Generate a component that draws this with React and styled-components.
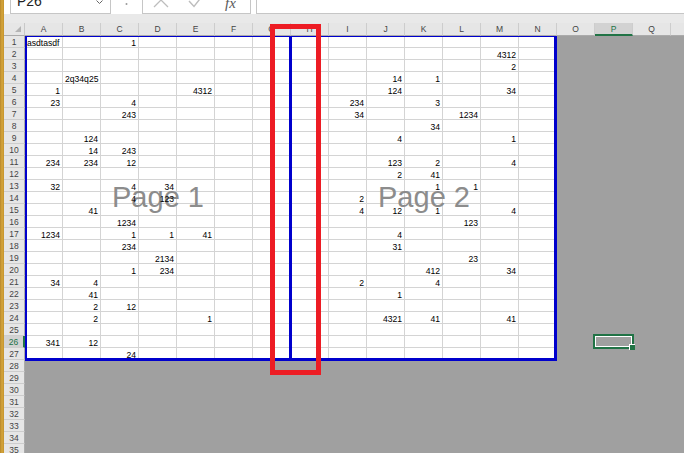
import React from 'react';
import styled, { createGlobalStyle } from 'styled-components';

const GlobalStyle = createGlobalStyle`
  html, body {
    margin: 0;
    padding: 0;
    overflow: hidden;
    background: #ffffff;
  }
  body {
    font-family: "Liberation Sans", Arial, sans-serif;
  }
`;

const COLUMNS = 'ABCDEFGHIJKLMNOPQ'.split('');
const PAGE_ONE = 'ABCDEFG'.split('');
const PAGE_TWO = 'HIJKLMN'.split('');
const PAGE_ROWS = 27;
const HEADER_ROWS = 35;
const SELECTED_COL = 'P';
const SELECTED_ROW = 26;
const GREEN = '#217346';
const BLUE = '#0000cc';

const DATA = {
  1: { A: 'asdtasdf', C: '1' },
  2: { M: '4312' },
  3: { M: '2' },
  4: { B: '2q34q25', J: '14', K: '1' },
  5: { A: '1', E: '4312', J: '124', M: '34' },
  6: { A: '23', C: '4', I: '234', K: '3' },
  7: { C: '243', I: '34', L: '1234' },
  8: { K: '34' },
  9: { B: '124', J: '4', M: '1' },
  10: { B: '14', C: '243' },
  11: { A: '234', B: '234', C: '12', J: '123', K: '2', M: '4' },
  12: { J: '2', K: '41' },
  13: { A: '32', C: '4', D: '34', K: '1', L: '1' },
  14: { C: '4', D: '123', I: '2' },
  15: { B: '41', I: '4', J: '12', K: '1', M: '4' },
  16: { C: '1234', L: '123' },
  17: { A: '1234', C: '1', D: '1', E: '41', J: '4' },
  18: { C: '234', J: '31' },
  19: { D: '2134', L: '23' },
  20: { C: '1', D: '234', K: '412', M: '34' },
  21: { A: '34', B: '4', I: '2', K: '4' },
  22: { B: '41', J: '1' },
  23: { B: '2', C: '12' },
  24: { B: '2', E: '1', J: '4321', K: '41', M: '41' },
  26: { A: '341', B: '12' },
  27: { C: '24' },
};

const Window = styled.div`
  position: relative;
  display: flex;
  width: 684px;
  height: 453px;
  overflow: hidden;
`;

const GoldStrip = styled.div`
  width: 4px;
  flex-shrink: 0;
  background: linear-gradient(90deg, #b7862a 0, #d5a63c 50%, #c4922c 100%);
`;

const Workspace = styled.div`
  flex: 1;
  display: flex;
  flex-direction: column;
  min-width: 0;
`;

const FormulaBar = styled.div`
  height: 14px;
  display: flex;
  align-items: flex-end;
  overflow: hidden;
  background: #ffffff;
  padding-left: 6px;
  flex-shrink: 0;
`;

const NameBox = styled.div`
  box-sizing: border-box;
  width: 101px;
  height: 25px;
  flex-shrink: 0;
  border: 1px solid #c6c6c6;
  display: flex;
  align-items: center;
  justify-content: space-between;
  padding: 0 7px 0 6px;
  font-size: 14px;
  line-height: 23px;
  color: #222222;
`;

const Dots = styled.div`
  width: 31px;
  height: 25px;
  flex-shrink: 0;
  display: flex;
  align-items: flex-end;
  justify-content: center;
  padding-bottom: 8px;
  box-sizing: border-box;
`;

const ButtonBox = styled.div`
  box-sizing: border-box;
  width: 109px;
  height: 25px;
  flex-shrink: 0;
  border: 1px solid #c6c6c6;
  display: grid;
  grid-template-columns: repeat(3, 35px);
  align-items: center;
  justify-items: center;
`;

const FxLabel = styled.span`
  font-family: "Liberation Serif", "Times New Roman", serif;
  font-style: italic;
  font-size: 15px;
  color: #5a5a5a;
  margin-top: 3px;
`;

const FormulaInput = styled.div`
  box-sizing: border-box;
  flex: 1;
  height: 25px;
  margin-left: 5px;
  border: 1px solid #c6c6c6;
  border-right: none;
`;

const Band = styled.div`
  height: 9px;
  flex-shrink: 0;
  background: #e9e9e9;
`;

const Sheet = styled.div`
  flex: 1;
  display: grid;
  grid-template-columns: 21px 1fr;
  grid-template-rows: 13px 1fr;
  min-height: 0;
`;

const Corner = styled.div`
  box-sizing: border-box;
  background: #e6e6e6;
  border-right: 1px solid #c8c8c8;
  border-bottom: 1px solid #ababab;
  display: flex;
  align-items: flex-end;
  justify-content: flex-end;
  padding: 0 3px 3px 0;
`;

const ColumnHeaders = styled.div`
  display: flex;
  overflow: hidden;
  background: #e6e6e6;
`;

const ColHeader = styled.div`
  box-sizing: border-box;
  width: 38px;
  flex-shrink: 0;
  height: 13px;
  border-right: 1px solid #cdcdcd;
  border-bottom: ${(p) => (p.$selected ? `2px solid ${GREEN}` : '1px solid #ababab')};
  background: ${(p) => (p.$selected ? '#d2d2d2' : '#e6e6e6')};
  color: ${(p) => (p.$selected ? GREEN : '#444444')};
  font-size: 8.5px;
  line-height: 12px;
  text-align: center;
`;

const HeaderFiller = styled.div`
  flex: 1;
  height: 13px;
  box-sizing: border-box;
  border-bottom: 1px solid #ababab;
`;

const RowHeaders = styled.div`
  display: flex;
  flex-direction: column;
  overflow: hidden;
  background: #e6e6e6;
`;

const RowHeader = styled.div`
  box-sizing: border-box;
  height: 12px;
  flex-shrink: 0;
  border-bottom: 1px solid #cdcdcd;
  border-right: ${(p) => (p.$selected ? `2px solid ${GREEN}` : '1px solid #ababab')};
  background: ${(p) => (p.$selected ? '#d2d2d2' : '#e6e6e6')};
  color: ${(p) => (p.$selected ? GREEN : '#444444')};
  font-size: 8.5px;
  line-height: 12px;
  text-align: center;
`;

const Canvas = styled.div`
  position: relative;
  background: #a0a0a0;
  overflow: hidden;
`;

const PrintArea = styled.div`
  display: flex;
  width: max-content;
`;

const Page = styled.div`
  position: relative;
  display: grid;
  grid-template-columns: repeat(7, 38px);
  grid-auto-rows: 12px;

  &::after {
    content: '';
    position: absolute;
    left: 0;
    right: 0;
    top: -1px;
    bottom: -1px;
    border-top: 2px solid ${BLUE};
    border-bottom: 3px solid ${BLUE};
    border-left: ${(p) => p.$left}px solid ${BLUE};
    border-right: ${(p) => p.$right}px solid ${BLUE};
    z-index: 3;
    pointer-events: none;
  }
`;

const Cell = styled.div`
  box-sizing: border-box;
  background: #ffffff;
  border-right: 1px solid #d4d4d4;
  border-bottom: 1px solid #d4d4d4;
  padding: 0 2px;
  font-size: 8.6px;
  line-height: 14px;
  white-space: nowrap;
  color: #000000;
  text-align: ${(p) => p.$align};
`;

const CellText = styled.span`
  position: relative;
  z-index: 2;
`;

const Watermark = styled.div`
  position: absolute;
  inset: 0;
  display: flex;
  align-items: center;
  justify-content: center;
  font-size: 29px;
  color: #8c8c8c;
  z-index: 1;
  pointer-events: none;
  padding-bottom: 2px;
`;

const Selection = styled.div`
  position: absolute;
  left: 568px;
  top: 298px;
  width: 41px;
  height: 15px;
  box-sizing: border-box;
  border: 2px solid ${GREEN};
  box-shadow: inset 0 0 0 1px #ffffff;
`;

const FillHandle = styled.div`
  position: absolute;
  right: -3px;
  bottom: -3px;
  width: 6px;
  height: 6px;
  box-sizing: border-box;
  background: ${GREEN};
  border-left: 1px solid #ffffff;
  border-top: 1px solid #ffffff;
`;

const Annotation = styled.div`
  position: absolute;
  left: 270px;
  top: 24px;
  width: 51px;
  height: 351px;
  box-sizing: border-box;
  border: 5px solid #ed1c24;
  z-index: 10;
  pointer-events: none;
`;

const CornerTriangle = () => (
  <svg width="6" height="6" viewBox="0 0 6 6">
    <polygon points="6,0 6,6 0,6" fill="#b4b4b4" />
  </svg>
);

const Caret = () => (
  <svg width="7" height="4" viewBox="0 0 7 4">
    <polyline points="0.5,0.5 3.5,3.5 6.5,0.5" fill="none" stroke="#666" strokeWidth="1" />
  </svg>
);

const VerticalDots = () => (
  <svg width="3" height="14" viewBox="0 0 3 14">
    <circle cx="1.5" cy="2" r="1" fill="#9a9a9a" />
    <circle cx="1.5" cy="7" r="1" fill="#9a9a9a" />
    <circle cx="1.5" cy="12" r="1" fill="#9a9a9a" />
  </svg>
);

const CancelIcon = () => (
  <svg width="16" height="16" viewBox="0 0 16 16" style={{ marginTop: -3 }}>
    <path d="M1 1 L15 15 M15 1 L1 15" stroke="#bdbdbd" strokeWidth="1.3" fill="none" />
  </svg>
);

const EnterIcon = () => (
  <svg width="16" height="14" viewBox="0 0 16 14" style={{ marginTop: -2 }}>
    <path d="M1 7 L6 12.5 L15 1" stroke="#bdbdbd" strokeWidth="1.4" fill="none" />
  </svg>
);

const isNumber = (v) => /^\d+$/.test(v);

const PageGrid = ({ columns, label, left, right }) => (
  <Page $left={left} $right={right}>
    {Array.from({ length: PAGE_ROWS }, (_, r) =>
      columns.map((col) => {
        const value = DATA[r + 1] && DATA[r + 1][col];
        return (
          <Cell key={`${col}${r + 1}`} $align={value && !isNumber(value) ? 'left' : 'right'}>
            {value && <CellText>{value}</CellText>}
          </Cell>
        );
      })
    )}
    <Watermark>{label}</Watermark>
  </Page>
);

const App = () => (
  <Window>
    <GlobalStyle />
    <GoldStrip />
    <Workspace>
      <FormulaBar>
        <NameBox>
          <span>P26</span>
          <Caret />
        </NameBox>
        <Dots>
          <VerticalDots />
        </Dots>
        <ButtonBox>
          <CancelIcon />
          <EnterIcon />
          <FxLabel>fx</FxLabel>
        </ButtonBox>
        <FormulaInput />
      </FormulaBar>
      <Band />
      <Sheet>
        <Corner>
          <CornerTriangle />
        </Corner>
        <ColumnHeaders>
          {COLUMNS.map((col) => (
            <ColHeader key={col} $selected={col === SELECTED_COL}>
              {col}
            </ColHeader>
          ))}
          <HeaderFiller />
        </ColumnHeaders>
        <RowHeaders>
          {Array.from({ length: HEADER_ROWS }, (_, i) => (
            <RowHeader key={i} $selected={i + 1 === SELECTED_ROW}>
              {i + 1}
            </RowHeader>
          ))}
        </RowHeaders>
        <Canvas>
          <PrintArea>
            <PageGrid columns={PAGE_ONE} label="Page 1" left={2} right={2} />
            <PageGrid columns={PAGE_TWO} label="Page 2" left={1} right={3} />
          </PrintArea>
          <Selection>
            <FillHandle />
          </Selection>
        </Canvas>
      </Sheet>
    </Workspace>
    <Annotation />
  </Window>
);

export default App;
